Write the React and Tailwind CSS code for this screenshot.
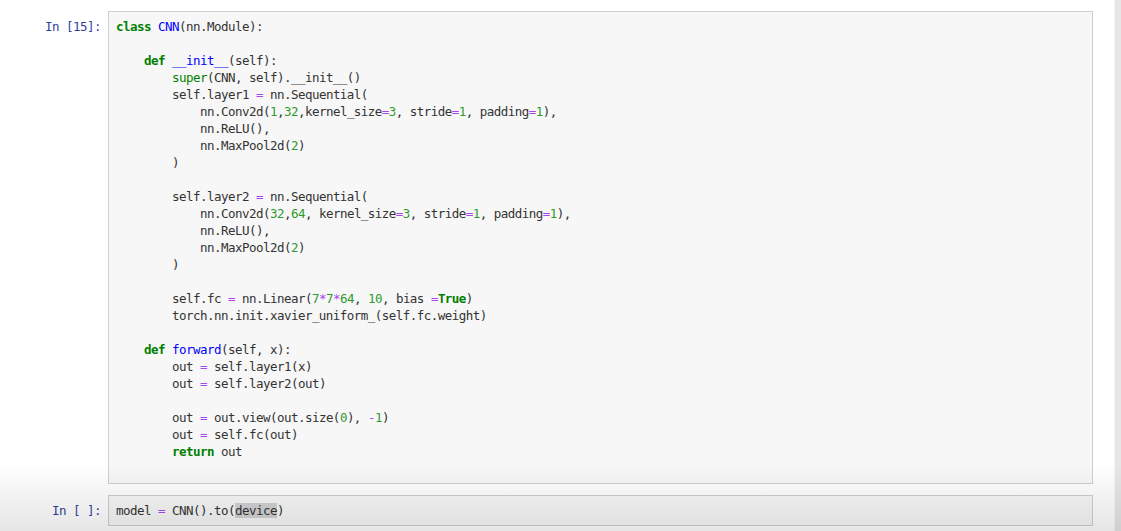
const K = "text-[#008000] font-bold";
const F = "text-[#0000ff]";
const N = "text-[#2e9a2e]";
const O = "text-[#aa44ee]";
const B = "text-[#008000]";

const code = [
  [["class", K], [" "], ["CNN", F], ["(nn.Module):"]],
  [],
  [["    "], ["def", K], [" "], ["__init__", F], ["(self):"]],
  [["        "], ["super", B], ["(CNN, self).__init__()"]],
  [["        self.layer1 "], ["=", O], [" nn.Sequential("]],
  [["            nn.Conv2d("], ["1", N], [","], ["32", N], [",kernel_size"], ["=", O], ["3", N], [", stride"], ["=", O], ["1", N], [", padding"], ["=", O], ["1", N], ["),"]],
  [["            nn.ReLU(),"]],
  [["            nn.MaxPool2d("], ["2", N], [")"]],
  [["        )"]],
  [],
  [["        self.layer2 "], ["=", O], [" nn.Sequential("]],
  [["            nn.Conv2d("], ["32", N], [","], ["64", N], [", kernel_size"], ["=", O], ["3", N], [", stride"], ["=", O], ["1", N], [", padding"], ["=", O], ["1", N], ["),"]],
  [["            nn.ReLU(),"]],
  [["            nn.MaxPool2d("], ["2", N], [")"]],
  [["        )"]],
  [],
  [["        self.fc "], ["=", O], [" nn.Linear("], ["7", N], ["*", O], ["7", N], ["*", O], ["64", N], [", "], ["10", N], [", bias "], ["=", O], ["True", K], [")"]],
  [["        torch.nn.init.xavier_uniform_(self.fc.weight)"]],
  [],
  [["    "], ["def", K], [" "], ["forward", F], ["(self, x):"]],
  [["        out "], ["=", O], [" self.layer1(x)"]],
  [["        out "], ["=", O], [" self.layer2(out)"]],
  [],
  [["        out "], ["=", O], [" out.view(out.size("], ["0", N], ["), "], ["-", O], ["1", N], [")"]],
  [["        out "], ["=", O], [" self.fc(out)"]],
  [["        "], ["return", K], [" out"]],
  [],
];

const mono = "font-['DejaVu_Sans_Mono','Liberation_Mono',monospace] text-[12.5px] tracking-[-0.53px] leading-[17px] whitespace-pre";

function Line({ tokens }) {
  return (
    <div className="h-[17px]">
      {tokens.length === 0 ? " " : tokens.map((t, i) => (
        <span key={i} className={t[1] || ""}>{t[0]}</span>
      ))}
    </div>
  );
}

function Cell({ prompt, children }) {
  return (
    <div className="flex">
      <div className={`w-[108px] shrink-0 pr-[7px] pt-[7px] text-right text-[#303f9f] ${mono}`}>{prompt}</div>
      <div className={`flex-1 border border-[#cfcfcf] bg-[#f7f7f7] pl-[7px] pt-[6px] pb-[6px] text-[#333] ${mono}`}>
        {children}
      </div>
    </div>
  );
}

export default function App() {
  return (
    <div className="relative flex h-[531px] w-full overflow-hidden bg-white">
      <div className="flex flex-1 flex-col gap-[11px] pt-[11px] pr-[21px]">
        <Cell prompt="In [15]:">
          {code.map((l, i) => <Line key={i} tokens={l} />)}
        </Cell>
        <Cell prompt="In [ ]:">
          <Line tokens={[["model "], ["=", O], [" CNN().to("], ["device", "bg-[#d2d2d2]"], [")"]]} />
        </Cell>
      </div>
      <div className="w-[7px] border-l border-[#f4f4f4] bg-[#e6e6e6]" />
      <div className="pointer-events-none absolute bottom-0 left-0 h-[68px] w-full bg-gradient-to-b from-transparent to-black/10" />
    </div>
  );
}
